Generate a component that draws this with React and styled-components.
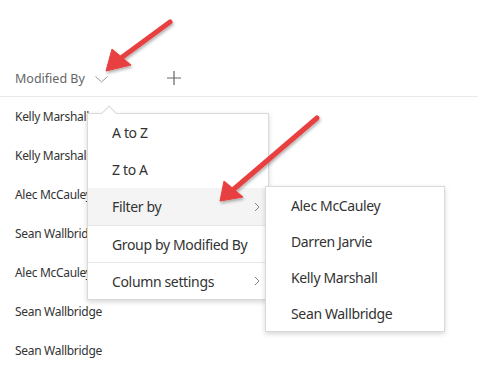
import React from 'react';
import styled, { createGlobalStyle } from 'styled-components';

const GlobalStyle = createGlobalStyle`
  html, body {
    margin: 0;
    padding: 0;
    background: #fff;
  }
  body {
    font-family: "Segoe UI", "Noto Sans", "Open Sans", sans-serif;
    color: #333;
  }
`;

const Page = styled.div`
  position: relative;
  width: 478px;
  height: 374px;
  overflow: hidden;
  background: #fff;
`;

const Header = styled.div`
  display: flex;
  align-items: center;
  height: 36px;
  margin-top: 60px;
  padding-left: 15px;
  border-bottom: 1px solid #eaeaea;
  color: #666;
  font-size: 12.5px;
`;

const HeaderTitle = styled.span`
  letter-spacing: 0;
`;

const Chevron = styled.svg`
  margin-left: 10px;
  margin-top: 3px;
`;

const AddButton = styled.svg`
  margin-left: 59px;
`;

const Row = styled.div`
  display: flex;
  align-items: center;
  height: 39px;
  padding-left: 15px;
  font-size: 12px;
  letter-spacing: -0.3px;
  color: #333;
`;

const Menu = styled.div`
  position: absolute;
  left: ${(p) => p.left}px;
  top: ${(p) => p.top}px;
  width: ${(p) => p.width}px;
  background: #fff;
  border: 1px solid #dadada;
  box-shadow: 0 2px 5px rgba(0, 0, 0, 0.16);
  z-index: ${(p) => p.z || 1};
`;

const Beak = styled.div`
  position: absolute;
  left: 15px;
  top: -6px;
  width: 11px;
  height: 11px;
  background: #fff;
  border-left: 1px solid #dadada;
  border-top: 1px solid #dadada;
  transform: rotate(45deg);
`;

const Item = styled.div`
  position: relative;
  display: flex;
  align-items: center;
  justify-content: space-between;
  height: ${(p) => p.h}px;
  padding-left: ${(p) => p.pad}px;
  padding-right: 8px;
  font-size: 14px;
  letter-spacing: -0.35px;
  color: #333;
  background: ${(p) => (p.active ? '#f4f4f4' : '#fff')};
  border-top: ${(p) => (p.divider ? '1px solid #e6e6e6' : 'none')};
  box-sizing: border-box;
`;

const SubArrow = styled.svg`
  flex: none;
`;

const Arrows = styled.svg`
  position: absolute;
  left: 0;
  top: 0;
  pointer-events: none;
  z-index: 5;
`;

const rows = [
  'Kelly Marshall',
  'Kelly Marshall',
  'Alec McCauley',
  'Sean Wallbridge',
  'Alec McCauley',
  'Sean Wallbridge',
  'Sean Wallbridge',
];

const menu = [
  { label: 'A to Z' },
  { label: 'Z to A' },
  { label: 'Filter by', sub: true, active: true },
  { label: 'Group by Modified By', divider: true },
  { label: 'Column settings', sub: true, divider: true },
];

const people = ['Alec McCauley', 'Darren Jarvie', 'Kelly Marshall', 'Sean Wallbridge'];

const Caret = () => (
  <SubArrow width="6" height="10" viewBox="0 0 6 10">
    <path d="M1 1 L5 5 L1 9" fill="none" stroke="#888" strokeWidth="1" />
  </SubArrow>
);

const App = () => {
  return (
    <>
      <GlobalStyle />
      <Page>
        <Header>
          <HeaderTitle>Modified By</HeaderTitle>
          <Chevron width="13" height="7" viewBox="0 0 13 7">
            <path d="M0.5 0.5 L6.5 6 L12.5 0.5" fill="none" stroke="#999" strokeWidth="1" />
          </Chevron>
          <AddButton width="14" height="14" viewBox="0 0 14 14">
            <path d="M7 0 V14 M0 7 H14" stroke="#666" strokeWidth="1.2" />
          </AddButton>
        </Header>
        {rows.map((r, i) => (
          <Row key={i}>{r}</Row>
        ))}

        <Menu left={87} top={113} width={180}>
          <Beak />
          {menu.map((m) => (
            <Item key={m.label} h={37} pad={24} active={m.active} divider={m.divider}>
              <span>{m.label}</span>
              {m.sub && <Caret />}
            </Item>
          ))}
        </Menu>

        <Menu left={265} top={186} width={178} z={2}>
          {people.map((p) => (
            <Item key={p} h={36} pad={25}>
              {p}
            </Item>
          ))}
        </Menu>

        <Arrows width="478" height="374" viewBox="0 0 478 374">
          <defs>
            <filter id="sh" x="-20%" y="-20%" width="140%" height="140%">
              <feDropShadow dx="1" dy="2" stdDeviation="1.5" floodColor="#000" floodOpacity="0.3" />
            </filter>
          </defs>
          <g filter="url(#sh)" fill="#e8403f" stroke="#e8403f">
            <line x1="170" y1="22" x2="121" y2="58" strokeWidth="5" strokeLinecap="round" />
            <polygon points="106,71 112,49 131,65" strokeWidth="1" strokeLinejoin="round" />
            <line x1="317" y1="118" x2="234" y2="189" strokeWidth="5" strokeLinecap="round" />
            <polygon points="220,201 224,181 243,197" strokeWidth="1" strokeLinejoin="round" />
          </g>
        </Arrows>
      </Page>
    </>
  );
};

export default App;
